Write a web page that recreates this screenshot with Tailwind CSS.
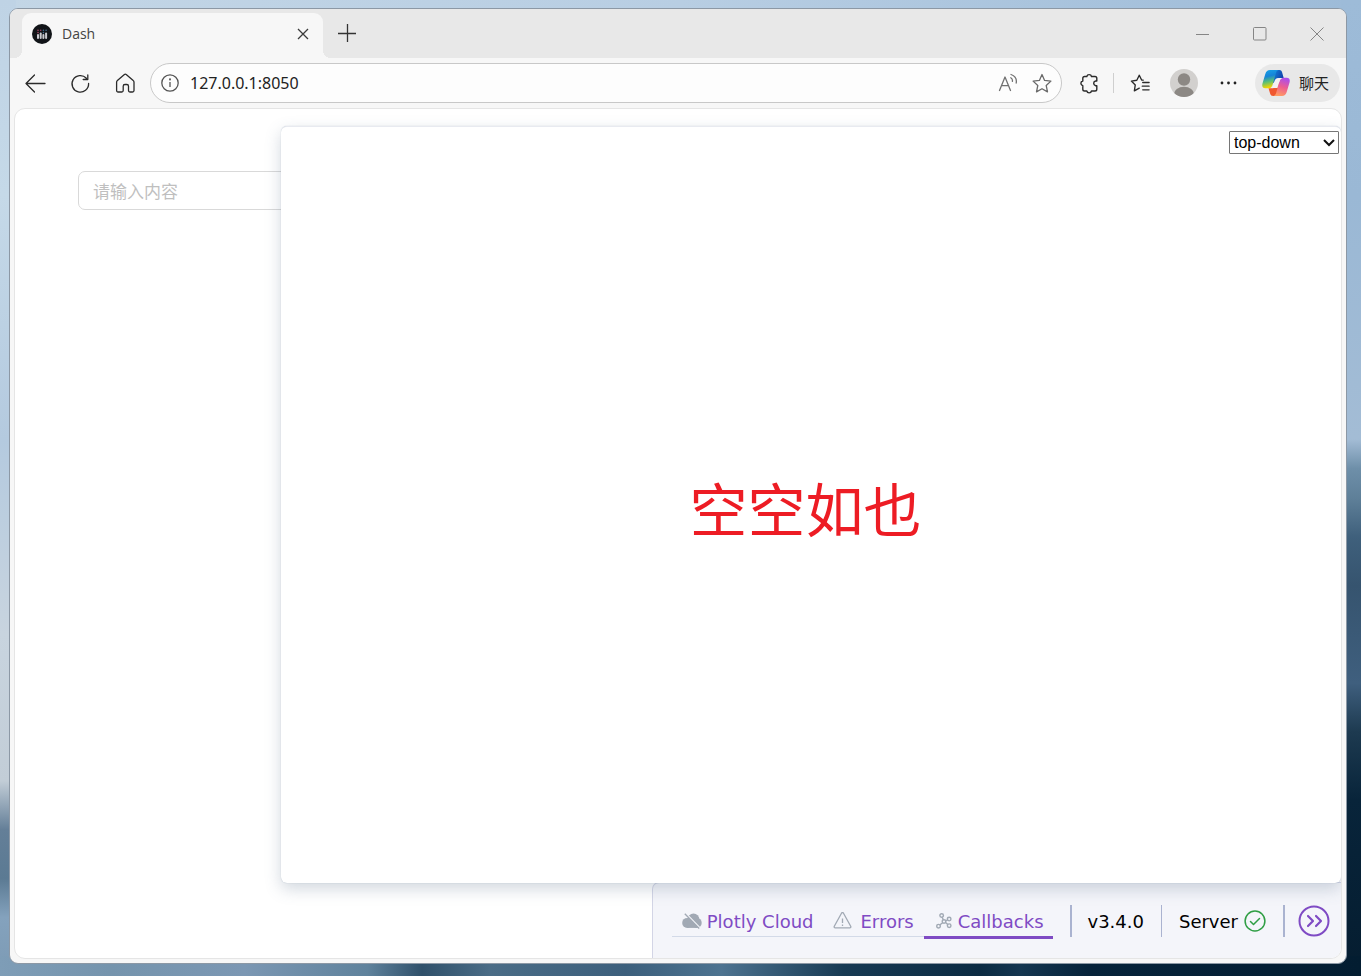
<!DOCTYPE html>
<html lang="zh-CN">
<head>
<meta charset="utf-8">
<meta name="viewport" content="width=device-width, initial-scale=1">
<title>Dash</title>
<script src="https://cdn.jsdelivr.net/npm/@tailwindcss/browser@4"></script>
</head>
<body class="relative flex h-screen flex-col overflow-hidden bg-[#b5cce2] pt-2 pr-[14px] pb-[12px] pl-[9px] font-['Open_Sans','Noto_Sans_CJK_SC',sans-serif]">
<!-- wallpaper -->
<div class="absolute inset-0 bg-linear-to-r from-[#c3d6e6] via-[#b8cee3] to-[#9dbbd8]"></div>
<div class="absolute inset-y-0 left-0 w-4 bg-[linear-gradient(#bfd3e5_0%,#c5d9e8_20%,#b4cadf_45%,#c8d4df_65%,#c2cdd7_80%,#647f98_85%,#5b7a93_90%,#84a2bd_94%,#7c9ab4_100%)]"></div>
<div class="absolute inset-y-0 right-0 w-5 bg-[linear-gradient(#9dbbd8_0%,#9ab8d5_20%,#a3bcd5_45%,#6e8fa9_48%,#5f8099_51%,#3f607c_55%,#36546f_60%,#3f5f7e_70%,#1d3a50_75%,#08243a_82%,#051d30_100%)]"></div>
<div class="absolute inset-x-0 bottom-0 h-5 bg-[linear-gradient(90deg,#7e9db7_0%,#7594ad_8%,#7b97b3_18%,#5f829c_27%,#2f506a_31%,#4a6c86_36%,#3c5f7c_46%,#4d7390_53%,#173a53_62%,#0b2b42_72%,#143650_75%,#06233a_80%,#031d31_100%)]"></div>

<div class="relative flex min-h-0 flex-1 flex-col overflow-hidden rounded-[9px] border border-[#8c98a5] bg-[#f7f7f7]">
  <header class="flex h-[49px] shrink-0 items-end bg-[#e8e8e8] pl-3">
    <div class="relative flex h-[45px] w-[301px] items-center rounded-t-[9px] bg-[#f7f7f7] pr-3 pb-1 pl-[10px]">
      <span class="absolute bottom-0 -left-2 size-2 bg-[radial-gradient(circle_at_0_0,#e8e8e8_8px,#f7f7f7_8px)]"></span>
      <span class="absolute -right-2 bottom-0 size-2 bg-[radial-gradient(circle_at_100%_0,#e8e8e8_8px,#f7f7f7_8px)]"></span>
      <svg class="size-5 shrink-0" viewBox="0 0 20 20"><circle cx="10" cy="10" r="10" fill="#111418"/><g fill="#c9c9cf"><rect x="5" y="10" width="2" height="5" rx="1"/><rect x="7.7" y="8.5" width="2" height="6.5" rx="1"/><rect x="10.4" y="10" width="2" height="5" rx="1"/><rect x="13.1" y="8.5" width="2" height="6.5" rx="1"/></g><g fill="#a54765"><circle cx="6" cy="6.2" r=".8"/><circle cx="8.7" cy="6.2" r=".8"/><circle cx="6" cy="8.6" r=".8"/></g><g fill="#436f91"><circle cx="11.4" cy="6.2" r=".8"/><circle cx="14.1" cy="6.2" r=".8"/><circle cx="11.4" cy="8.6" r=".8"/></g></svg>
      <span class="ml-[10px] flex-1 text-[14px] text-[#444]">Dash</span>
      <button aria-label="关闭标签页" class="flex size-4 items-center justify-center"><svg class="size-3" viewBox="0 0 12 12" stroke="#3b3b3b" stroke-width="1.3"><path d="M1 1l10 10M11 1L1 11"/></svg></button>
    </div>
    <button aria-label="新建标签页" class="mb-[15px] ml-[14px] flex size-5 items-center justify-center"><svg class="size-5" viewBox="0 0 20 20" stroke="#333" stroke-width="1.3"><path d="M1 10.5h18M10.500 1v18"/></svg></button>
    <div class="flex-1"></div>
    <div class="flex h-[49px] items-center gap-[43px] pr-[22px]">
      <button aria-label="最小化"><svg class="size-[14px]" viewBox="0 0 14 14" stroke="#858585"><path d="M0 7.5h13"/></svg></button>
      <button aria-label="最大化"><svg class="size-[14px]" viewBox="0 0 14 14" fill="none" stroke="#858585"><rect x=".5" y=".5" width="12.5" height="12.5" rx="1"/></svg></button>
      <button aria-label="关闭"><svg class="size-[14px]" viewBox="0 0 14 14" stroke="#858585"><path d="M.5.5l13 13M13.5.5L.5 13.5"/></svg></button>
    </div>
  </header>

  <nav class="flex h-[50px] shrink-0 items-center pr-[6px] pl-[14px]">
    <div class="flex items-center gap-[23px] text-[#2b2b2b]">
      <button aria-label="返回"><svg class="size-[22px]" viewBox="0 0 22 22" fill="none" stroke="currentColor" stroke-width="1.3" stroke-linecap="round" stroke-linejoin="round"><path d="M21 11.500H2M10.500 3L2 11.500 10.500 20"/></svg></button>
      <button aria-label="刷新"><svg class="size-[22px]" viewBox="0 0 22 22" fill="none" stroke="currentColor" stroke-width="1.3" stroke-linecap="round" stroke-linejoin="round"><path d="M19.600 11.500A8.300 8.300 0 1 1 17.400 6.200M18.800 3v4.500h-4.600"/></svg></button>
      <button aria-label="主页"><svg class="size-[22px]" viewBox="0 0 22 22" fill="none" stroke="currentColor" stroke-width="1.3" stroke-linecap="round" stroke-linejoin="round"><path d="M2.600 10.300c0-.7.300-1.300.8-1.700l6.700-5.900c.7-.6 1.700-.6 2.400 0l6.700 5.900c.5.400.8 1 .8 1.700v8.200c0 .9-.6 1.500-1.500 1.500h-2.600c-.9 0-1.400-.6-1.400-1.500v-4.300c0-1-.7-1.700-1.700-1.700h-1.900c-1 0-1.700.7-1.700 1.700v4.300c0 .9-.6 1.500-1.400 1.500H4.100c-.9 0-1.500-.6-1.500-1.500z"/></svg></button>
    </div>
    <div class="ml-[14px] flex h-10 flex-1 items-center rounded-full border border-[#c8c8c8] bg-[#fdfdfd] pr-2 pl-[10px]">
      <button aria-label="站点信息" class="shrink-0"><svg class="size-[18px]" viewBox="0 0 18 18" fill="none" stroke="#555" stroke-width="1.3"><circle cx="9" cy="9" r="8.200"/><path d="M9 8v5"/><circle cx="9" cy="5.400" r=".4" fill="#555"/></svg></button>
      <input aria-label="地址" value="127.0.0.1:8050" class="ml-[11px] min-w-0 flex-1 bg-transparent font-['Noto_Sans',sans-serif] text-[16px] text-[#222] outline-none">
      <button aria-label="朗读此页内容"><svg class="size-[22px]" viewBox="0 0 22 22" fill="none" stroke="#727272" stroke-width="1.300" stroke-linecap="round" stroke-linejoin="round"><path d="M2.500 18.500L8 5l5.500 13.500M4.500 13.700h7M13.800 5.800c1.300.8 1.900 2.100 1.600 3.600M14 2.500c3.800 1.300 5.900 4.400 5.200 8.500"/></svg></button>
      <button aria-label="收藏" class="ml-3"><svg class="size-[22px]" viewBox="0 0 22 22" fill="none" stroke="#6b6b6b" stroke-width="1.300" stroke-linejoin="round"><path d="M11 2.500l2.600 5.900 6.300.7-4.700 4.400 1.300 6.400-5.500-3.200-5.500 3.200 1.300-6.400-4.700-4.400 6.300-.7z"/></svg></button>
    </div>
    <div class="ml-4 flex items-center">
      <button aria-label="扩展"><svg class="size-[22px]" viewBox="0 0 22 22" fill="none" stroke="#2b2b2b" stroke-width="1.400" stroke-linejoin="round"><path d="M6.600 4.500h2.200a2.400 2.400 0 0 1 4.700 0h3.500c1.100 0 1.800.7 1.800 1.800v2.700h-1.200a2.400 2.400 0 0 0 0 4.700h1.200v3.500c0 1.100-.7 1.800-1.800 1.800h-3.500a2.400 2.400 0 0 1-4.700 0H6.600c-1.100 0-1.800-.7-1.800-1.800v-3.500a2.400 2.400 0 0 1 0-4.700V6.300c0-1.100.7-1.800 1.800-1.800z"/></svg></button>
      <span class="ml-[13px] h-5 w-px bg-[#cfcfcf]"></span>
      <button aria-label="收藏夹" class="ml-4"><svg class="size-5" viewBox="0 0 22 22" fill="none" stroke="#2b2b2b" stroke-width="1.500" stroke-linecap="round" stroke-linejoin="round"><path d="M14.500 7.900l-1.700-.2-2.600-5.300-2.700 5.600-6 .9 4.300 4.200-1 6.600 5.400-3.100M14 10.500h7M13.500 14.500h7.500M14 18.500h7"/></svg></button>
      <button aria-label="个人资料" class="ml-5"><svg class="size-7" viewBox="0 0 28 28"><defs><clipPath id="av"><circle cx="14" cy="14" r="14"/></clipPath></defs><g clip-path="url(#av)"><path fill="#d2d0ce" d="M0 0h28v28H0z"/><circle cx="14" cy="10.500" r="6.200" fill="#8c8884"/><ellipse cx="14" cy="25.500" rx="10.200" ry="7.700" fill="#8c8884"/></g></svg></button>
      <button aria-label="更多" class="ml-[22px]"><svg class="h-1 w-[17px]" viewBox="0 0 17 4" fill="#222"><circle cx="2" cy="2" r="1.400"/><circle cx="8.500" cy="2" r="1.400"/><circle cx="15" cy="2" r="1.400"/></svg></button>
      <button class="ml-[18px] flex h-[38px] items-center rounded-full bg-[#e8e8e8] pr-[11px] pl-[7px] font-['Noto_Sans_CJK_SC',sans-serif] text-[15px] text-[#222]">
        <svg class="mr-[9px] h-[26px] w-7" viewBox="0 0 28 26"><defs><linearGradient id="ca" x2=".2" y2="1"><stop stop-color="#18a4e8"/><stop offset=".4" stop-color="#1684d8"/><stop offset=".68" stop-color="#58bf78"/><stop offset="1" stop-color="#f2d500"/></linearGradient><linearGradient id="cb" x1=".7" x2=".4" y2="1"><stop stop-color="#a84df0"/><stop offset=".5" stop-color="#ed5d91"/><stop offset="1" stop-color="#ff9b62"/></linearGradient><linearGradient id="cc" x2="1" y2=".5"><stop stop-color="#128be0"/><stop offset="1" stop-color="#123ea8"/></linearGradient></defs><path fill="url(#cc)" d="M11 0h6.500c1.300 0 2.100.7 2.500 2l1.700 6h-4.500c-1.600 0-2.500.8-3 2.500L10 14z"/><path fill="#f0572f" d="M6.500 18.200h4.200c1.700 0 2.700-.9 3.200-2.600l4-3.600-1.500 14h-5.200c-1.700 0-2.600-.8-3.100-2.500z"/><path fill="url(#ca)" d="M8 0h8.500c-1.500.4-2.100 1.500-2.600 3.200l-3.300 11.500c-.6 2-1.700 3.500-4 3.500H3.300C.8 18.200-.2 16.300.4 13.800L3.300 4C4.100 1.200 5.600 0 8 0z"/><path fill="url(#cb)" d="M20 26h-8.500c1.500-.4 2.200-1.500 2.700-3.200l3.300-11.500c.6-2 1.700-3.500 4-3.500h3.200c2.500 0 3.500 1.900 2.900 4.400L24.700 22c-.8 2.800-2.300 4-4.700 4z"/><path fill="#f4f0f2" d="M17 8h3.500c-1.700.6-2.500 1.700-3 3.300L15.400 18h-6c1-.7 1.500-1.700 1.900-3l1.400-4.500C13.300 8.800 14.800 8 17 8z"/></svg>聊天
      </button>
    </div>
  </nav>

  <main class="relative mx-1 mb-1 min-h-0 flex-1 overflow-hidden rounded-[11px] border border-[#e5e5e5] bg-white">
    <div class="px-[63px] pt-[62px]">
      <input aria-label="内容" placeholder="请输入内容" class="block h-[39px] w-full rounded-[7px] border border-[#d9d9d9] px-[14px] font-['Noto_Sans_CJK_SC',sans-serif] text-[17px] placeholder:text-[#bfbfbf] outline-none">
    </div>

    <footer class="absolute right-0 bottom-0 flex h-[76px] items-center rounded-tl-[7px] border-t border-l border-[#d3d5e6] bg-[#f4f5fa] pr-[11px] pl-[19px] font-['DejaVu_Sans','Verdana',sans-serif] text-[18px] text-black">
      <div class="flex items-start text-[#7f4bc4]">
        <button class="flex h-[35px] items-center border-b border-[#d3dae8] pt-1 pr-[10px] pl-[10px]"><svg class="mr-[5px] h-4 w-5" viewBox="0 0 20 16" fill="#a1a9b4"><circle cx="5.200" cy="9.900" r="5"/><circle cx="11.500" cy="6.500" r="5.900"/><circle cx="14.700" cy="9.900" r="5"/><path d="M5.200 8h9.500v6.900H5.200z"/><path d="M3.200-.2L19 16" stroke="#f4f5fa" stroke-width="1.600"/><path d="M2.800.700L17.200 15.500" stroke="#a1a9b4" stroke-width="1.300"/></svg>Plotly Cloud</button>
        <button class="flex h-[35px] items-center border-b border-[#d3dae8] pt-1 pr-[10px] pl-[10px]"><svg class="mr-2 h-[18px] w-[19px]" viewBox="0 0 19 18" fill="none" stroke="#a1a9b4" stroke-width="1.300" stroke-linejoin="round"><path d="M8.500 1.200c.5-.8 1.500-.8 2 0l7.200 13c.4.800 0 1.600-1 1.600H2.300c-1 0-1.400-.8-1-1.600zM9.500 6.500V11M9.500 12.500V14"/></svg>Errors</button>
        <button class="flex h-[37px] items-center border-b-[3px] border-[#7f4bc4] pt-1 pr-[9px] pl-3"><svg class="mr-[6px] h-4 w-4" viewBox="0 0 17 17" fill="none" stroke="#a1a9b4" stroke-width="1.500"><circle cx="6" cy="2.700" r="1.900"/><circle cx="14" cy="6.500" r="1.900"/><circle cx="2.700" cy="14" r="1.900"/><circle cx="14" cy="13.500" r="1.900"/><circle cx="8.500" cy="9" r="1.900"/><path d="M6.500 4.500l1.300 2.700M10.300 8.300l2-.9M7 10.300l-3 2.500M10.200 10l2.300 2.200"/></svg>Callbacks</button>
      </div>
      <span class="ml-[17px] h-8 w-[2px] bg-[#aab3d0]"></span>
      <span class="ml-4 pt-px">v3.4.0</span>
      <span class="ml-[17px] h-8 w-px bg-[#aab3d0]"></span>
      <span class="ml-[17px] pt-px">Server</span>
      <svg class="ml-[6px] size-[22px]" viewBox="0 0 22 22" fill="none" stroke="#2f9e44" stroke-width="1.500" stroke-linecap="round" stroke-linejoin="round"><circle cx="11" cy="11" r="9.900"/><path d="M6.500 11.500l3 3 6-6"/></svg>
      <span class="ml-[17px] h-8 w-[2px] bg-[#aab3d0]"></span>
      <button aria-label="收起" class="ml-[13px]"><svg class="size-8" viewBox="0 0 32 32" fill="none" stroke="#7f4bc4" stroke-width="2" stroke-linecap="round" stroke-linejoin="round"><circle cx="16" cy="16" r="14.500"/><path d="M10 11l5 5-5 5M18 11l5 5-5 5" stroke-width="2.200"/></svg></button>
    </footer>

    <section class="absolute top-[17px] right-0 bottom-[75px] left-[266px] rounded-[6px] border-t border-[#e8eaf0] bg-white shadow-[0_0_1px_rgba(80,103,132,0.4),0_6px_16px_rgba(80,103,132,0.26)]">
      <div class="flex justify-end pt-1 pr-[2px]">
        <div class="relative">
          <select aria-label="布局" class="block h-[23px] w-[110px] appearance-none rounded-[1px] border border-[#767676] bg-white pl-1 font-['Liberation_Sans',sans-serif] text-[16px] leading-5 text-black"><option>top-down</option></select>
          <svg class="pointer-events-none absolute top-2 right-1 h-2 w-3" viewBox="0 0 12 8" fill="none" stroke="#111" stroke-width="2"><path d="M1 1l5 5 5-5"/></svg>
        </div>
      </div>
      <div class="pointer-events-none absolute inset-0 flex items-center justify-center pt-1 pr-[11px] font-['Noto_Sans_CJK_SC',sans-serif] text-[58px] leading-none text-[#ed1c24]"><p>空空如也</p></div>
    </section>
  </main>
</div>
</body>
</html>
